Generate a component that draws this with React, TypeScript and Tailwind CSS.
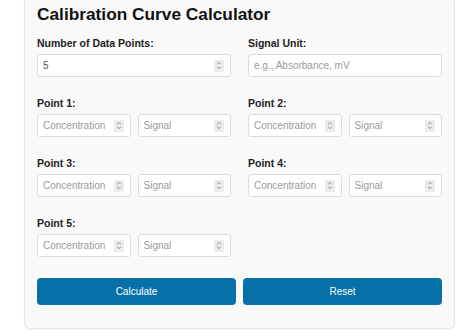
import React from "react";

const font = { fontFamily: '"Liberation Sans", Arial, sans-serif' };

function Spinner() {
  return (
    <div className="absolute right-[6px] top-1/2 -translate-y-1/2 w-[10px] h-[12px] bg-[#ebebeb] rounded-[1px] flex items-center justify-center">
      <svg width="6" height="9" viewBox="0 0 6 9" fill="none" stroke="#8a8a8a" strokeWidth="1">
        <path d="M1.2 3.2 L3 1.4 L4.8 3.2" />
        <path d="M1.2 5.8 L3 7.6 L4.8 5.8" />
      </svg>
    </div>
  );
}

function Field({ placeholder, value, spinner }: { placeholder?: string; value?: string; spinner?: boolean }) {
  return (
    <div className="relative h-[23px] bg-white border border-[#dcdcdc] rounded-[3px] flex items-center pl-[5px]">
      {value ? (
        <span className="text-[10px] text-[#555]">{value}</span>
      ) : (
        <span className="text-[10px] text-[#9a9a9a]">{placeholder}</span>
      )}
      {spinner && <Spinner />}
    </div>
  );
}

function Label({ children }: { children: React.ReactNode }) {
  return <div className="text-[10.5px] leading-[13px] font-bold text-[#222] mb-[4px]">{children}</div>;
}

function PointField({ n }: { n: number }) {
  return (
    <div>
      <Label>Point {n}:</Label>
      <div className="grid grid-cols-2 gap-[7px]">
        <Field placeholder="Concentration" spinner />
        <Field placeholder="Signal" spinner />
      </div>
    </div>
  );
}

export default function App() {
  return (
    <div className="w-[474px] h-[333px] bg-white overflow-hidden" style={font}>
      <div className="ml-[24px] w-[431px] bg-[#f9f9f9] border border-t-0 border-[#e4e4e4] rounded-b-[6px] px-[12px] pt-[4px] pb-[23px] shadow-[0_1px_2px_rgba(0,0,0,0.04)]">
        <h1 className="text-[17.3px] leading-[20px] font-bold text-[#111] mb-[13px]">Calibration Curve Calculator</h1>
        <div className="grid grid-cols-2 gap-x-[17px] gap-y-[20px]">
          <div>
            <Label>Number of Data Points:</Label>
            <Field value="5" spinner />
          </div>
          <div>
            <Label>Signal Unit:</Label>
            <Field placeholder="e.g., Absorbance, mV" />
          </div>
          <PointField n={1} />
          <PointField n={2} />
          <PointField n={3} />
          <PointField n={4} />
          <PointField n={5} />
        </div>
        <div className="grid grid-cols-2 gap-[7px] mt-[21px]">
          <button className="h-[27px] bg-[#0870a8] text-white text-[10px] rounded-[4px]">Calculate</button>
          <button className="h-[27px] bg-[#0870a8] text-white text-[10px] rounded-[4px]">Reset</button>
        </div>
      </div>
    </div>
  );
}
